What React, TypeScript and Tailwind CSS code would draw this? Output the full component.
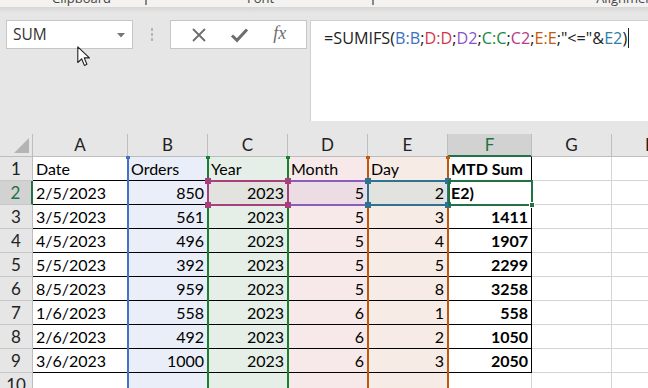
import React from "react";

type Val = string | number;

const rows: Val[][] = [
  ["Date", "Orders", "Year", "Month", "Day", "MTD Sum"],
  ["2/5/2023", 850, 2023, 5, 2, "E2)"],
  ["3/5/2023", 561, 2023, 5, 3, 1411],
  ["4/5/2023", 496, 2023, 5, 4, 1907],
  ["5/5/2023", 392, 2023, 5, 5, 2299],
  ["8/5/2023", 959, 2023, 5, 8, 3258],
  ["1/6/2023", 558, 2023, 6, 1, 558],
  ["2/6/2023", 492, 2023, 6, 2, 1050],
  ["3/6/2023", 1000, 2023, 6, 3, 2050],
];

const cols = [
  { key: "A", w: "w-[95px]", bg: "bg-white" },
  { key: "B", w: "w-[80px]", bg: "bg-[#e9eef8]" },
  { key: "C", w: "w-[80px]", bg: "bg-[#e5efe7]" },
  { key: "D", w: "w-[80px]", bg: "bg-[#f7e9e9]" },
  { key: "E", w: "w-[80px]", bg: "bg-[#f7ebe6]" },
  { key: "F", w: "w-[84px]", bg: "bg-white" },
  { key: "G", w: "w-[80px]", bg: "bg-white" },
  { key: "H", w: "w-[80px]", bg: "bg-white" },
];

// row 2 tints where the referenced single cells sit
const row2Bg: Record<string, string> = {
  C: "bg-[#e2e2df]",
  D: "bg-[#ecdde5]",
  E: "bg-[#e2e2df]",
};

const cellFont = { fontFamily: "Lato, 'Open Sans', sans-serif" };

const Handle = ({ className }: { className: string }) => (
  <div className={`absolute w-[6px] h-[6px] ${className}`} />
);

export default function App() {
  return (
    <div className="w-[648px] h-[388px] overflow-hidden bg-[#e6e6e6] flex flex-col select-none">
      {/* Ribbon group labels, cut off at top */}
      <div className="h-[7px] bg-[#f3f2f1] overflow-hidden relative shrink-0">
        <div
          className="flex items-start -mt-[9px] text-[13px] leading-[14px] text-[#444] whitespace-nowrap"
          style={{ fontFamily: "'Open Sans', sans-serif" }}
        >
          <span className="ml-[52px]">Clipboard</span>
          <span className="ml-[34px] mt-[4px] w-[10px] h-[10px] border border-[#888]" />
          <span className="ml-[100px]">Font</span>
          <span className="ml-[98px] mt-[4px] w-[10px] h-[10px] border border-[#888]" />
          <span className="ml-[222px]">Alignment</span>
        </div>
      </div>
      <div className="h-[6px] shrink-0 bg-gradient-to-b from-[#d6d6d6] to-[#e6e6e6]" />

      {/* Name box / buttons / formula bar */}
      <div className="flex items-start pl-[6px] pt-[7px] h-[108px] shrink-0">
        <div className="relative shrink-0 w-[127px] h-[29px] bg-white border border-[#c6c6c6] flex items-center pl-[6px]">
          <span
            className="text-[15.5px] text-[#333]"
            style={{ fontFamily: "'Open Sans', sans-serif" }}
          >
            SUM
          </span>
          <svg className="absolute right-[7px] top-[12px]" width="8" height="5" viewBox="0 0 8 5">
            <path d="M0 0 L8 0 L4 4.5 Z" fill="#777" />
          </svg>
          {/* mouse pointer */}
          <svg
            className="absolute left-[70px] top-[25px]"
            width="14"
            height="21"
            viewBox="0 0 14 21"
          >
            <path
              d="M0.8 0.8 L0.8 16.5 L4.6 12.8 L7.4 19.4 L9.9 18.3 L7.2 11.9 L12.4 11.9 Z"
              fill="#fff"
              stroke="#222"
              strokeWidth="1.1"
              strokeLinejoin="round"
            />
          </svg>
        </div>
        <div className="shrink-0 w-[37px] h-[29px] flex flex-col items-center justify-center gap-[2px]">
          <span className="w-[2px] h-[3px] bg-[#b5b5b5]" />
          <span className="w-[2px] h-[3px] bg-[#b5b5b5]" />
          <span className="w-[2px] h-[3px] bg-[#b5b5b5]" />
        </div>
        <div className="shrink-0 w-[137px] h-[29px] bg-white border border-[#c6c6c6] flex items-center justify-around px-[8px]">
          <svg width="16" height="16" viewBox="0 0 16 16">
            <path d="M2 2 L14 14 M14 2 L2 14" stroke="#6d6d6d" strokeWidth="1.8" />
          </svg>
          <svg width="19" height="16" viewBox="0 0 19 16">
            <path d="M2 8.5 L7 13.3 L17 2.5" stroke="#6d6d6d" strokeWidth="3" fill="none" />
          </svg>
          <span
            className="text-[18px] italic text-[#6d6d6d] -mt-[2px]"
            style={{ fontFamily: "'Liberation Serif', serif" }}
          >
            fx
          </span>
        </div>
        <div className="ml-[3px] flex-1 h-[101px] bg-white border-l border-t border-[#d0d0d0] pl-[13px] pt-[6px]">
          <div
            className="text-[16.2px] leading-[22px] text-[#222] flex items-center whitespace-nowrap"
            style={{ fontFamily: "'Open Sans', sans-serif" }}
          >
            <span>=SUMIFS(</span>
            <span className="text-[#3b72c6]">B:B</span>
            <span>;</span>
            <span className="text-[#d3344f]">D:D</span>
            <span>;</span>
            <span className="text-[#8c55c7]">D2</span>
            <span>;</span>
            <span className="text-[#15883a]">C:C</span>
            <span>;</span>
            <span className="text-[#b53b86]">C2</span>
            <span>;</span>
            <span className="text-[#c4590f]">E:E</span>
            <span>;"&lt;="&amp;</span>
            <span className="text-[#2f7fa9]">E2</span>
            <span>)</span>
            <span className="ml-[1px] w-[1px] h-[20px] bg-[#222]" />
          </div>
        </div>
      </div>

      <div className="h-[13px] shrink-0" />

      {/* Sheet grid */}
      <div className="relative flex-1" style={cellFont}>
        {/* column headers */}
        <div className="flex h-[23px]">
          <div className="w-[33px] shrink-0 h-[23px] relative border-r border-b border-[#bdbdbd] bg-[#e6e6e6]">
            <svg className="absolute right-[3px] bottom-[3px]" width="15" height="15" viewBox="0 0 15 15">
              <path d="M15 0 L15 15 L0 15 Z" fill="#b4b4b4" />
            </svg>
          </div>
          {cols.map((c) => (
            <div
              key={c.key}
              className={`${c.w} shrink-0 h-[23px] flex items-center justify-center text-[17px] border-r ${
                c.key === "F"
                  ? "bg-[#d2d2d2] text-[#217346] border-b-2 border-b-[#217346] border-r-[#bdbdbd]"
                  : "bg-[#e6e6e6] text-[#222] border-b border-[#bdbdbd]"
              }`}
            >
              {c.key}
            </div>
          ))}
        </div>

        {/* rows */}
        {[...rows, null].map((r, ri) => {
          const n = ri + 1;
          const inTable = r !== null;
          return (
            <div key={n} className="flex h-[24px]">
              <div
                className={`w-[33px] shrink-0 h-[24px] flex items-center justify-center text-[17px] border-b border-b-[#c8c8c8] ${
                  n === 2
                    ? "bg-[#d2d2d2] text-[#217346] border-r-2 border-r-[#217346]"
                    : "bg-[#e6e6e6] text-[#222] border-r border-r-[#bdbdbd]"
                }`}
              >
                {n}
              </div>
              {cols.map((c, ci) => {
                const v = r && ci < 6 ? r[ci] : "";
                const tableCell = inTable && ci < 6;
                const bg = n === 2 && row2Bg[c.key] ? row2Bg[c.key] : c.bg;
                const isNum = typeof v === "number";
                const bold = c.key === "F";
                return (
                  <div
                    key={c.key}
                    className={`${c.w} shrink-0 h-[24px] ${bg} border-r border-b ${
                      tableCell ? "border-black" : "border-[#d4d4d4]"
                    } flex items-end pb-[1px] text-[16px] leading-[20px] text-black ${
                      isNum ? "justify-end pr-[3px]" : "justify-start pl-[3px]"
                    } ${bold ? "font-bold" : ""}`}
                  >
                    {v}
                  </div>
                );
              })}
            </div>
          );
        })}

        {/* range reference highlights */}
        <div className="absolute left-[127px] top-[23px] bottom-0 w-[2px] bg-[#3f73c7]" />
        <div className="absolute left-[126px] top-[22px] w-[4px] h-[3px] bg-[#3f73c7]" />
        <div className="absolute left-[207px] top-[23px] bottom-0 w-[2px] bg-[#1b7f30]" />
        <div className="absolute left-[206px] top-[22px] w-[4px] h-[3px] bg-[#1b7f30]" />
        <div className="absolute left-[287px] top-[23px] bottom-0 w-[2px] bg-[#1b7f30]" />
        <div className="absolute left-[286px] top-[22px] w-[4px] h-[3px] bg-[#1b7f30]" />
        <div className="absolute left-[367px] top-[23px] bottom-0 w-[2px] bg-[#c0580f]" />
        <div className="absolute left-[366px] top-[22px] w-[4px] h-[3px] bg-[#c0580f]" />
        <div className="absolute left-[447px] top-[23px] bottom-0 w-[2px] bg-[#c0580f]" />
        <div className="absolute left-[446px] top-[22px] w-[4px] h-[3px] bg-[#c0580f]" />

        {/* D2 */}
        <div className="absolute left-[288px] top-[46px] w-[80px] h-[2px] bg-[#8a5cbb]" />
        <div className="absolute left-[288px] top-[70px] w-[80px] h-[2px] bg-[#8a5cbb]" />

        {/* C2 */}
        <div className="absolute left-[207px] top-[46px] w-[82px] h-[26px] border-2 border-[#a8407d]" />
        <Handle className="left-[205px] top-[44px] bg-[#a8407d]" />
        <Handle className="left-[285px] top-[44px] bg-[#a8407d]" />
        <Handle className="left-[205px] top-[68px] bg-[#a8407d]" />
        <Handle className="left-[285px] top-[68px] bg-[#a8407d]" />

        {/* E2 */}
        <div className="absolute left-[367px] top-[46px] w-[82px] h-[26px] border-2 border-[#2e7390]" />
        <Handle className="left-[365px] top-[44px] bg-[#2e7390]" />
        <Handle className="left-[445px] top-[44px] bg-[#2e7390]" />
        <Handle className="left-[365px] top-[68px] bg-[#2e7390]" />
        <Handle className="left-[445px] top-[68px] bg-[#2e7390]" />

        {/* active cell F2 */}
        <div className="absolute left-[448px] top-[46px] w-[85px] h-[26px] border-2 border-[#217346]" />
        <div className="absolute left-[529px] top-[68px] w-[6px] h-[6px] bg-[#217346] border border-white" />
      </div>
    </div>
  );
}
